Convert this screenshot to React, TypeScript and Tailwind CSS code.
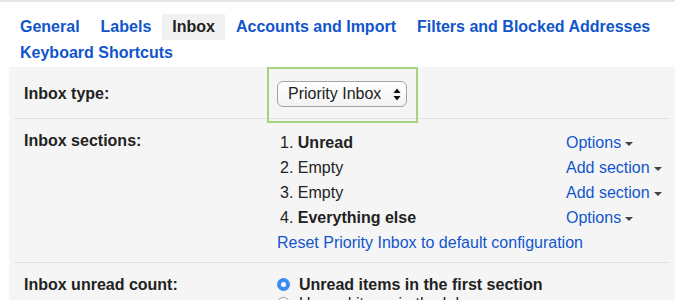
import React from "react";

const font = { fontFamily: '"Liberation Sans", Arial, sans-serif' };

const Caret = () => (
  <span className="ml-[4px] inline-block h-0 w-0 border-x-[4px] border-t-[4px] border-x-transparent border-t-[#444] align-middle" />
);

const tabs = [
  "General",
  "Labels",
  "Inbox",
  "Accounts and Import",
  "Filters and Blocked Addresses",
  "Keyboard Shortcuts",
];

const sections = [
  { n: "1.", label: "Unread", bold: true, link: "Options" },
  { n: "2.", label: "Empty", bold: false, link: "Add section" },
  { n: "3.", label: "Empty", bold: false, link: "Add section" },
  { n: "4.", label: "Everything else", bold: true, link: "Options" },
];

export default function App() {
  return (
    <div
      className="h-[300px] w-[675px] overflow-hidden border-t-2 border-[#e6e6e6] bg-white text-[16px] text-[#222]"
      style={font}
    >
      {/* tabs */}
      <div className="flex flex-wrap gap-x-[1px] pl-[10px] pt-[12px] pr-[10px]">
        {tabs.map((t) => (
          <div
            key={t}
            className={
              t === "Inbox"
                ? "h-[26px] bg-[#f1f1f1] px-[10px] font-bold leading-[26px] text-[#222]"
                : "h-[26px] px-[10px] font-bold leading-[26px] text-[#1155cc]"
            }
          >
            {t}
          </div>
        ))}
      </div>

      {/* settings panel */}
      <div className="ml-[9px] mt-[1px] bg-[#f5f5f5] px-[5px]">
        {/* inbox type */}
        <div className="flex border-b border-[#e3e3e3]">
          <div className="w-[263px] shrink-0 pl-[10px] pt-[14px] font-bold leading-[26px]">
            Inbox type:
          </div>
          <div className="relative pt-[14px] pb-[11px]">
            <div className="absolute -left-[10px] top-0 z-10 h-[56px] w-[151px] border-2 border-[#a6d27d]" />
            <div className="flex h-[26px] w-[130px] items-center justify-between rounded-[6px] border border-[#a3a3a3] bg-gradient-to-b from-white to-[#f3f3f3] pl-[10px] pr-[5px]">
              <span className="leading-[24px]">Priority Inbox</span>
              <svg width="8" height="13" viewBox="0 0 8 13">
                <path d="M4 0.5 L7.5 5 L0.5 5 Z" fill="#111" />
                <path d="M0.5 8 L7.5 8 L4 12.5 Z" fill="#111" />
              </svg>
            </div>
          </div>
        </div>

        {/* inbox sections */}
        <div className="flex border-b border-[#e3e3e3]">
          <div className="w-[263px] shrink-0 pl-[10px] pt-[9px] font-bold leading-[25px]">
            Inbox sections:
          </div>
          <div className="pt-[11px] pb-[7px] leading-[25px]">
            {sections.map((s, i) => (
              <div key={i} className="flex">
                <div className="w-[289px] pl-[3px]">
                  {s.n} <span className={s.bold ? "font-bold" : ""}>{s.label}</span>
                </div>
                <div className="text-[#1155cc]">
                  {s.link}
                  <Caret />
                </div>
              </div>
            ))}
            <div className="text-[#1155cc]">Reset Priority Inbox to default configuration</div>
          </div>
        </div>

        {/* unread count */}
        <div className="flex">
          <div className="w-[263px] shrink-0 pl-[10px] pt-[9px] font-bold leading-[25px]">
            Inbox unread count:
          </div>
          <div className="pt-[12px] leading-[19px]">
            <div className="flex items-center">
              <span className="flex h-[13px] w-[13px] items-center justify-center rounded-full bg-[#3b8cf0]">
                <span className="h-[5px] w-[5px] rounded-full bg-white" />
              </span>
              <span className="ml-[9px] font-bold">Unread items in the first section</span>
            </div>
            <div className="flex items-center">
              <span className="h-[13px] w-[13px] rounded-full border border-[#999] bg-white" />
              <span className="ml-[9px]">Unread items in the Inbox</span>
            </div>
          </div>
        </div>
      </div>
    </div>
  );
}
